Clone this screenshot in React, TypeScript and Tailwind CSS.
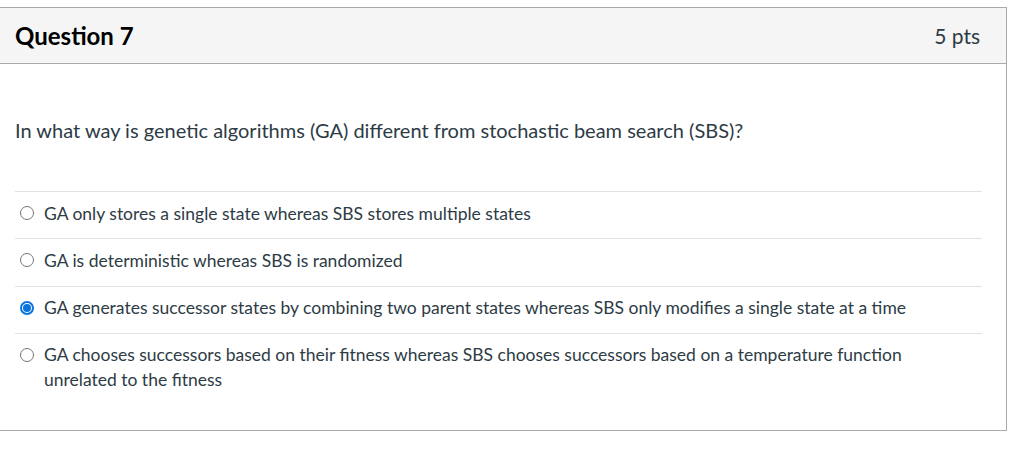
import React from "react";

const answers = [
  { text: "GA only stores a single state whereas SBS stores multiple states", selected: false },
  { text: "GA is deterministic whereas SBS is randomized", selected: false },
  {
    text: "GA generates successor states by combining two parent states whereas SBS only modifies a single state at a time",
    selected: true,
  },
  {
    text: "GA chooses successors based on their fitness whereas SBS chooses successors based on a temperature function unrelated to the fitness",
    selected: false,
  },
];

function Radio({ selected }: { selected: boolean }) {
  if (selected) {
    return (
      <span className="mt-[5.5px] flex h-[14px] w-[14px] shrink-0 items-center justify-center rounded-full border-[2px] border-[#0b74de] bg-white">
        <span className="h-[8px] w-[8px] rounded-full bg-[#0b74de]" />
      </span>
    );
  }
  return <span className="mt-[5.5px] h-[14px] w-[14px] shrink-0 rounded-full border border-[#767676] bg-white" />;
}

export default function App() {
  return (
    <div className="h-[476px] w-[1022px] bg-white pt-[7px] font-['Lato','Liberation_Sans',sans-serif] text-[#2d3b45]">
      <div className="ml-[-1px] w-[1008px] border border-[#aaaaaa] bg-white">
        <div className="flex h-[56px] items-center justify-between border-b border-[#aaaaaa] bg-[#f5f5f5] pl-[15px] pr-[26px]">
          <h2 className="text-[24px] font-bold text-[#000000]">Question 7</h2>
          <div className="text-[21px] text-[#2d3b45]">5 pts</div>
        </div>
        <div className="pl-[15px] pr-[24px] pt-[51px] pb-[25px]">
          <p className="text-[20px] leading-[30px]">
            In what way is genetic algorithms (GA) different from stochastic beam search (SBS)?
          </p>
          <div className="mt-[46px]">
            {answers.map((a, i) => (
              <div
                key={i}
                className="flex gap-[10px] border-t border-[#dfe2e4] pl-[5px] pt-[8.5px] pb-[12.8px] text-[17.5px] leading-[25px]"
              >
                <Radio selected={a.selected} />
                <span className="pr-[70px]">{a.text}</span>
              </div>
            ))}
          </div>
        </div>
      </div>
    </div>
  );
}
